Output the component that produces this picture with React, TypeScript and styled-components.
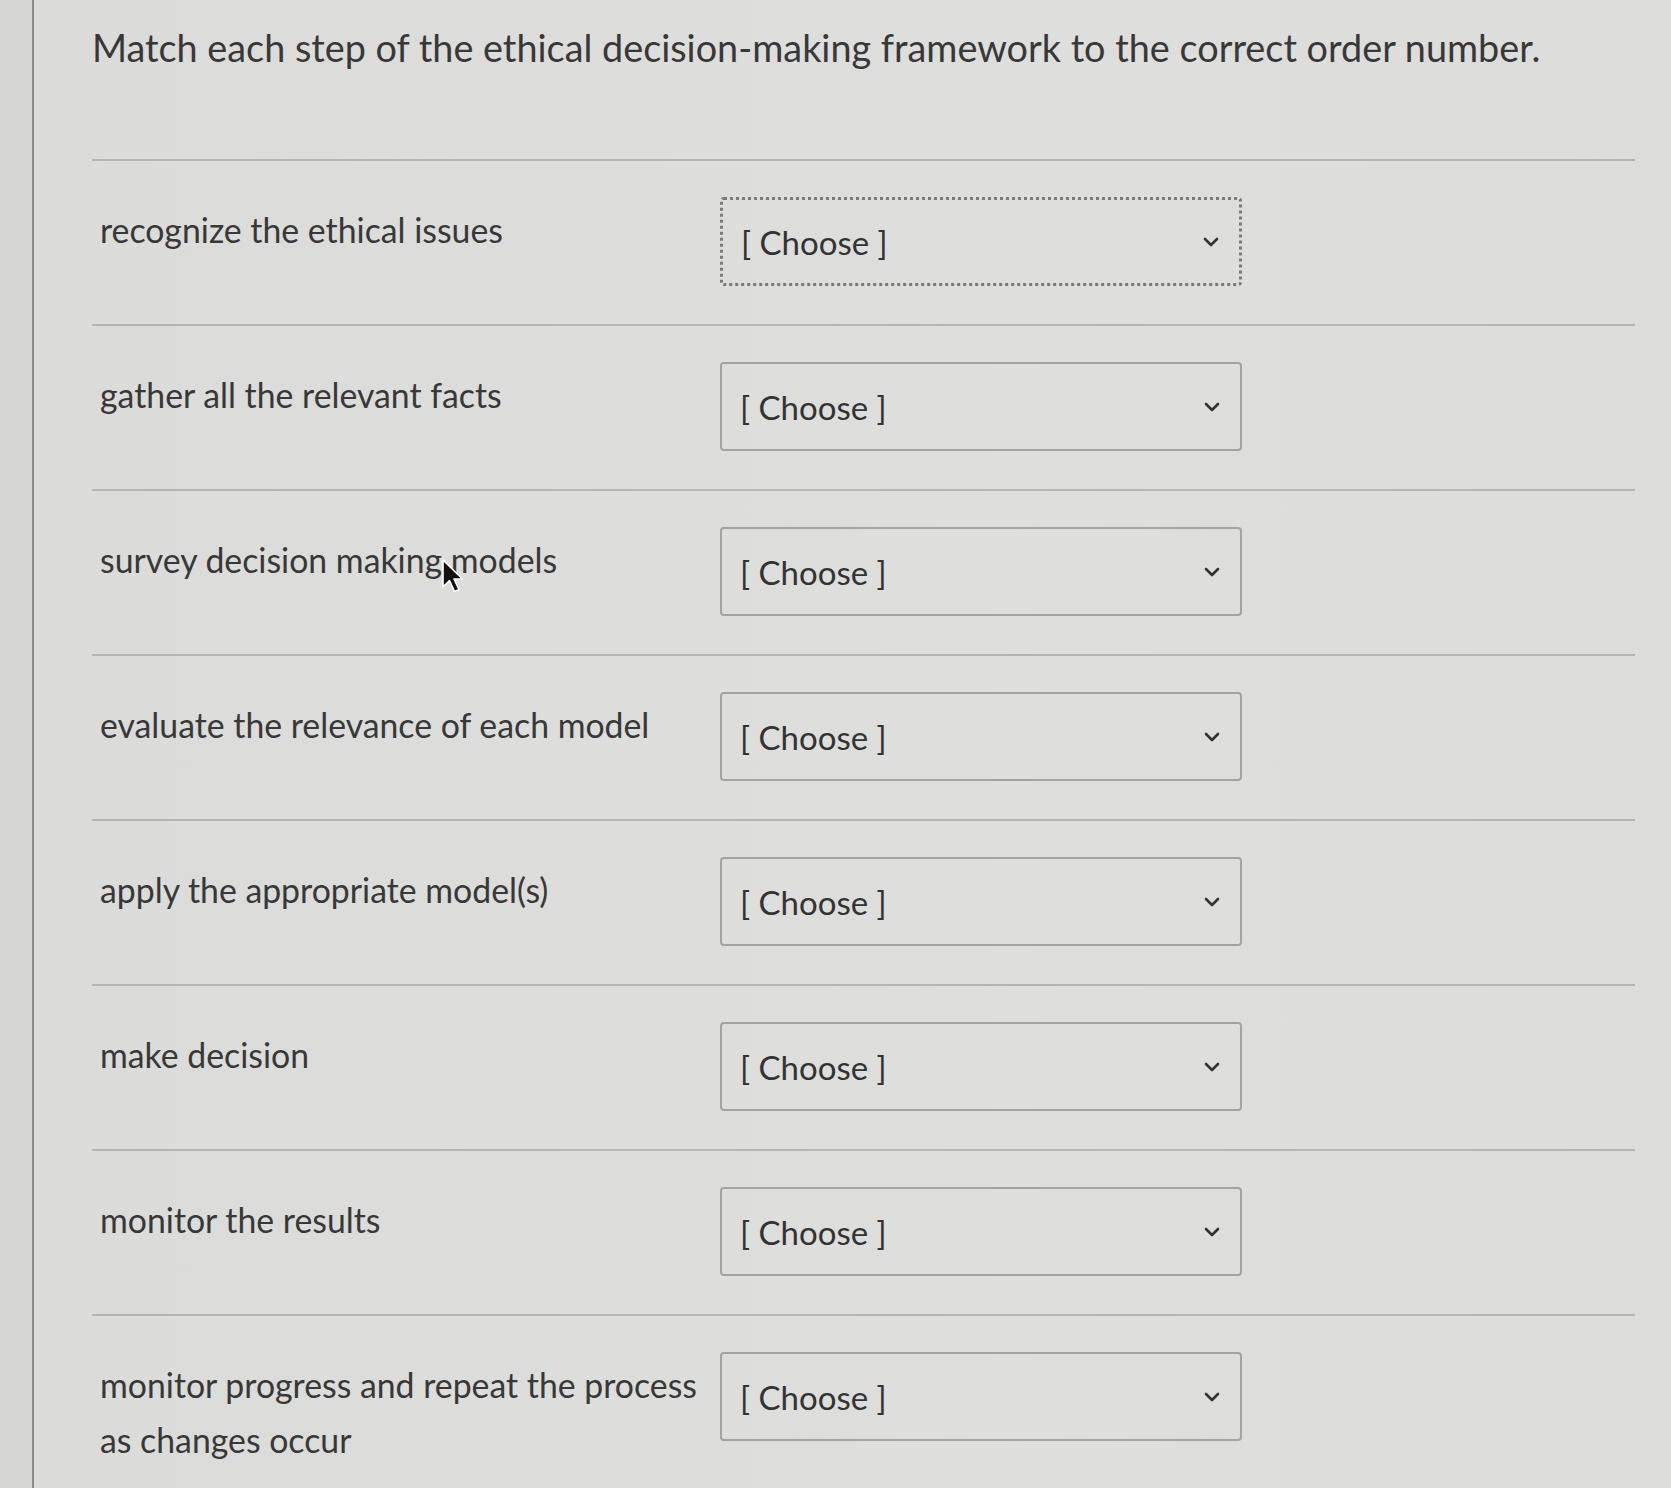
import React from "react";
import styled, { createGlobalStyle } from "styled-components";

const Global = createGlobalStyle`
  html, body {
    margin: 0;
    padding: 0;
    background: #d9d9d8;
  }
  body {
    font-family: Lato, "Open Sans", Arial, sans-serif;
    color: #3b3b3b;
  }
`;

const Page = styled.div`
  position: relative;
  min-height: 1488px;
  padding-left: 32px;
  box-sizing: border-box;
  background: #d6d6d5;
  overflow: hidden;
`;

const Frame = styled.div`
  min-height: 1488px;
  border-left: 2px solid #8c8c8c;
  background: linear-gradient(90deg, #dbdbda 0%, #dededd 60%, #dcdcdb 100%);
  padding: 21px 36px 0 58px;
  box-sizing: border-box;
`;

const Title = styled.h1`
  margin: 0;
  font-size: 37.8px;
  line-height: 54px;
  font-weight: 400;
  color: #383838;
`;

const List = styled.div`
  margin-top: 84px;
  border-top: 2px solid #b5b5b4;
`;

const Row = styled.div`
  display: grid;
  grid-template-columns: 620px 522px;
  align-items: start;
  padding: 36px 0 38px 8px;
  border-bottom: 2px solid #b5b5b4;
  min-height: 89px;
`;

const Label = styled.div`
  padding-top: 6px;
  font-size: 33.8px;
  line-height: 55px;
  color: #383838;
`;

const Select = styled.div<{ $focused?: boolean }>`
  height: 89px;
  box-sizing: border-box;
  border: ${(p) => (p.$focused ? "3px dotted #7a7a7a" : "2px solid #a3a3a2")};
  border-radius: 4px;
  display: flex;
  align-items: center;
  justify-content: space-between;
  padding: 0 20px 0 18px;
  background: transparent;
`;

const SelectText = styled.span`
  font-size: 33px;
  color: #333333;
`;

const Chevron = () => (
  <svg width="16" height="10" viewBox="0 0 16 10" fill="none">
    <path d="M2 2 L8 8 L14 2" stroke="#333" strokeWidth="2.6" strokeLinecap="round" strokeLinejoin="round" />
  </svg>
);

const Cursor = styled.svg`
  position: absolute;
  left: 441px;
  top: 558px;
`;

const steps = [
  "recognize the ethical issues",
  "gather all the relevant facts",
  "survey decision making models",
  "evaluate the relevance of each model",
  "apply the appropriate model(s)",
  "make decision",
  "monitor the results",
  "monitor progress and repeat the process as changes occur",
];

export default function App() {
  return (
    <>
      <Global />
      <Page>
        <Frame>
          <Title>Match each step of the ethical decision-making framework to the correct order number.</Title>
          <List>
            {steps.map((s, i) => (
              <Row key={s}>
                <Label>{s}</Label>
                <Select $focused={i === 0}>
                  <SelectText>[ Choose ]</SelectText>
                  <Chevron />
                </Select>
              </Row>
            ))}
          </List>
        </Frame>
        <Cursor width="26" height="38" viewBox="0 0 26 38">
          <path d="M2 2 L2 29 L8.5 22.5 L13.5 33.5 L18 31.5 L13 21 L21.5 21 Z" fill="#111" stroke="#fff" strokeWidth="1.6" strokeLinejoin="round" />
        </Cursor>
      </Page>
    </>
  );
}
